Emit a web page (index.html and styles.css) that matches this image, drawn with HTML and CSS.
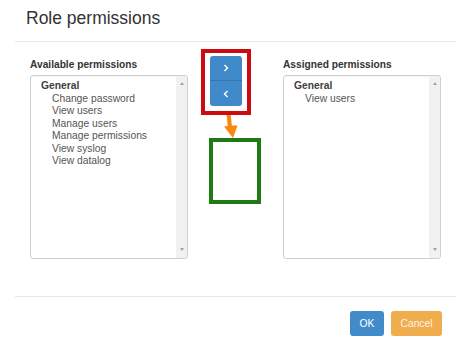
FILE: index.html
```html
<!DOCTYPE html>
<html>
<head>
<meta charset="utf-8">
<link rel="stylesheet" href="styles.css">
</head>
<body>
<div class="dialog">
  <div class="header">
    <h3 class="title">Role permissions</h3>
  </div>
  <div class="body">
    <div class="col">
      <div class="label">Available permissions</div>
      <div class="listbox">
        <div class="items">
          <div class="group">General</div>
          <div class="item">Change password</div>
          <div class="item">View users</div>
          <div class="item">Manage users</div>
          <div class="item">Manage permissions</div>
          <div class="item">View syslog</div>
          <div class="item">View datalog</div>
        </div>
        <div class="scroll"><span class="up"></span><span class="down"></span></div>
      </div>
    </div>
    <div class="middle">
      <div class="red-box">
        <div class="btn-group">
          <button class="move first"><svg width="6" height="8" viewBox="0 0 6 8"><polyline points="1.5,1 4.5,4 1.5,7" fill="none" stroke="#fff" stroke-width="1.4"/></svg></button>
          <button class="move last"><svg width="6" height="8" viewBox="0 0 6 8"><polyline points="4.5,1 1.5,4 4.5,7" fill="none" stroke="#fff" stroke-width="1.4"/></svg></button>
        </div>
      </div>
      <svg class="arrow" width="20" height="23" viewBox="0 0 20 23">
        <polygon points="4.6,0 8.8,0 9.8,10.5 15.5,10.5 11,23 2,11.5 5.8,11" fill="#f7870f"/>
      </svg>
      <div class="green-box"></div>
    </div>
    <div class="col">
      <div class="label">Assigned permissions</div>
      <div class="listbox">
        <div class="items">
          <div class="group">General</div>
          <div class="item">View users</div>
        </div>
        <div class="scroll"><span class="up"></span><span class="down"></span></div>
      </div>
    </div>
  </div>
  <div class="footer">
    <button class="btn primary">OK</button>
    <button class="btn warning">Cancel</button>
  </div>
</div>
</body>
</html>
```
FILE: styles.css
```css
html, body {
  margin: 0;
  padding: 0;
  background: #fff;
}
body {
  font-family: "Liberation Sans", Arial, sans-serif;
  color: #333;
}
.dialog {
  margin: 0 18px 0 15px;
}
.header {
  padding: 8px 0 13px 11px;
  border-bottom: 1px solid #e8e8e8;
}
.title {
  margin: 0;
  font-size: 17.5px;
  line-height: 20px;
  font-weight: normal;
  color: #333;
}
.body {
  display: flex;
  align-items: flex-start;
  padding: 0 0 37px 15px;
}
.col {
  width: 158px;
  margin-top: 16px;
}
.label {
  font-size: 10.2px;
  line-height: 13px;
  font-weight: bold;
  color: #333;
  margin-bottom: 4px;
}
.listbox {
  box-sizing: border-box;
  height: 184px;
  border: 1px solid #cfcfcf;
  border-radius: 3px;
  display: flex;
  overflow: hidden;
  box-shadow: inset 0 1px 1px rgba(0,0,0,0.05);
}
.items {
  flex: 1;
  padding: 4px 0 0 10px;
  font-size: 10.3px;
  line-height: 12.5px;
}
.group {
  font-weight: bold;
  color: #404040;
}
.item {
  padding-left: 11px;
  color: #555;
}
.scroll {
  width: 11px;
  background: #f1f1f1;
  display: flex;
  flex-direction: column;
  justify-content: space-between;
  align-items: center;
  padding: 6px 0 7px;
  box-sizing: border-box;
}
.up, .down {
  width: 0;
  height: 0;
  border-left: 2.5px solid transparent;
  border-right: 2.5px solid transparent;
}
.up { border-bottom: 3px solid #a0a0a0; }
.down { border-top: 3px solid #a0a0a0; }
.middle {
  width: 95px;
  display: flex;
  flex-direction: column;
  align-items: flex-start;
}
.red-box {
  box-sizing: border-box;
  width: 50px;
  height: 66px;
  margin: 7px 0 0 13px;
  border: 4px solid #cc0a10;
  padding: 3px 5px 5px 5px;
}
.btn-group {
  display: flex;
  flex-direction: column;
}
.move {
  box-sizing: border-box;
  width: 32px;
  height: 25px;
  margin: 0;
  padding: 0;
  background: #418ac9;
  border: 0;
  display: flex;
  align-items: center;
  justify-content: center;
}
.move.first {
  border-radius: 3px 3px 0 0;
  border-bottom: 1px solid #3474b0;
}
.move.last {
  border-radius: 0 0 3px 3px;
}
.arrow {
  display: block;
  margin-left: 34px;
}
.green-box {
  box-sizing: border-box;
  width: 52px;
  height: 66px;
  margin-left: 21px;
  border: 4px solid #1e7a12;
}
.footer {
  border-top: 1px solid #e8e8e8;
  padding: 14px 14px 0 0;
  display: flex;
  justify-content: flex-end;
  gap: 7px;
}
.btn {
  box-sizing: border-box;
  height: 25px;
  border: 0;
  border-radius: 3px;
  color: #fff;
  font-family: "Liberation Sans", Arial, sans-serif;
  font-size: 10.3px;
  padding: 0;
  margin: 0;
}
.btn.primary {
  width: 34px;
  background: #428bca;
}
.btn.warning {
  width: 51px;
  background: #f0ad4e;
  color: #fdf3e6;
}
```
